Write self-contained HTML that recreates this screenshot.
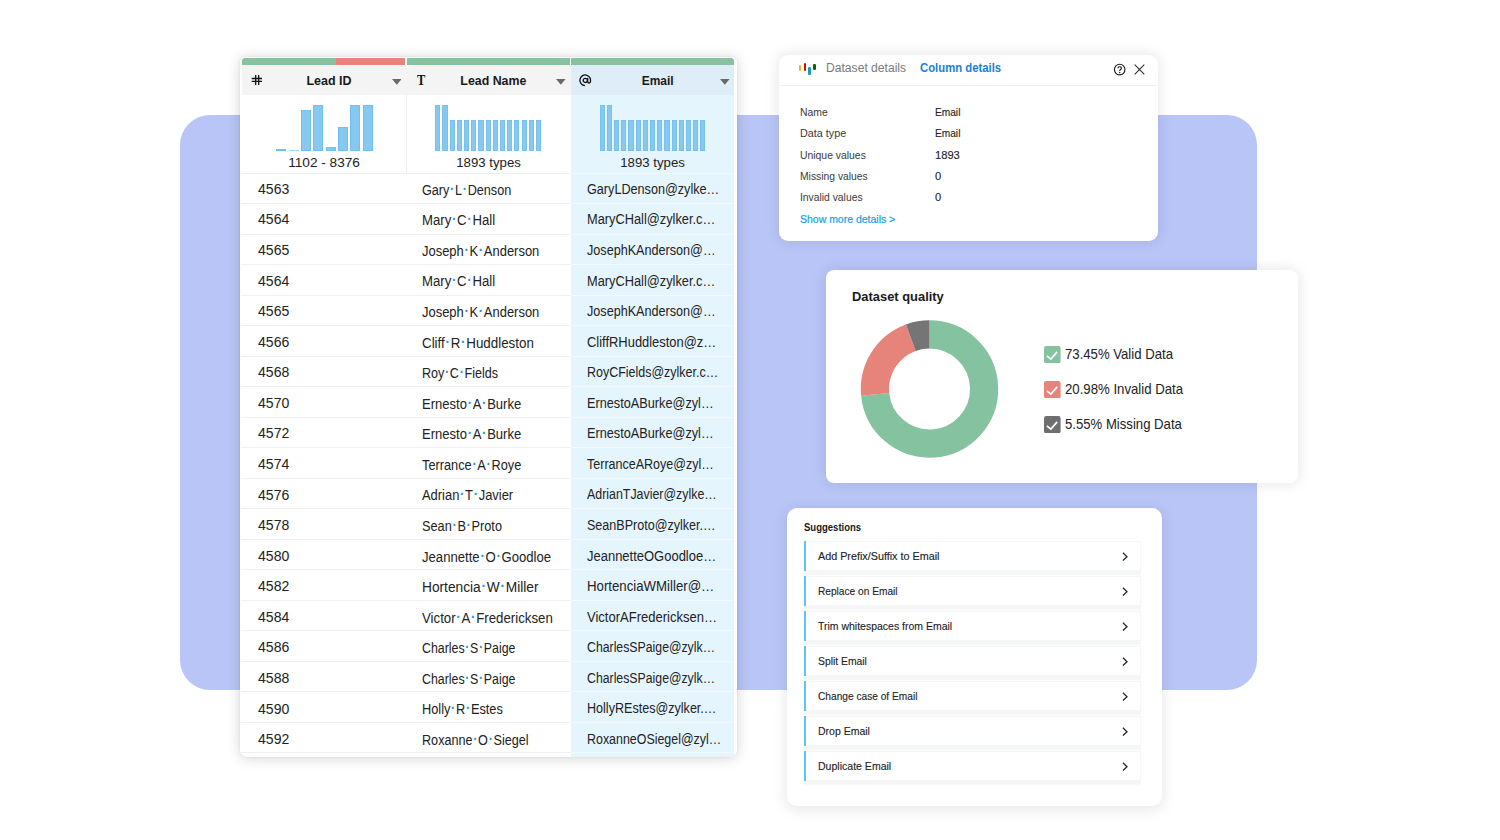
<!DOCTYPE html>
<html lang="en"><head><meta charset="utf-8"><title>Dataset details</title><style>
html,body{margin:0;padding:0;background:#fff;}
body{width:1500px;height:840px;position:relative;overflow:hidden;font-family:"Liberation Sans", sans-serif;}
body div,body svg,.t{position:absolute;}
.tbl{overflow:hidden;border-radius:5px 5px 7px 7px;}
.t{white-space:pre;line-height:20px;display:inline-block;}
.t i{font-style:normal;color:#1a98ea;font-weight:700;padding:0 .75px;position:relative;top:-1px;}
</style></head><body>
<div style="left:180.00px;top:115.00px;width:1077.00px;height:575.00px;background:#b9c5f6;border-radius:30px;"></div>
<section aria-label="Leads data table">
<div style="left:240.30px;top:57.00px;width:496.50px;height:699.60px;background:#fff;border-radius:5px 5px 7px 7px;box-shadow:0 1px 14px rgba(0,0,0,.17),0 0 3px rgba(0,0,0,.07);"></div>
<div class="tbl" style="left:240.3px;top:57.0px;width:496.50px;height:699.60px;"><div style="left:1.70px;top:7.60px;width:328.80px;height:30.00px;background:#f4f4f4;"></div>
<div style="left:330.50px;top:7.60px;width:163.70px;height:30.00px;background:#deedf7;"></div>
<div style="left:330.50px;top:37.60px;width:163.70px;height:662.00px;background:#e5f5fe;"></div>
<div style="left:1.70px;top:1.00px;width:94.00px;height:6.60px;background:#85c2a0;border-radius:3px 0 0 0;"></div>
<div style="left:95.70px;top:1.00px;width:69.30px;height:6.60px;background:#e6837b;"></div>
<div style="left:166.70px;top:1.00px;width:162.80px;height:6.60px;background:#85c2a0;"></div>
<div style="left:331.00px;top:1.00px;width:163.20px;height:6.60px;background:#85c2a0;border-radius:0 3px 0 0;"></div>
<div style="left:165.30px;top:37.60px;width:1.00px;height:78.50px;background:#efefef;"></div>
<div style="left:0.50px;top:115.50px;width:330.00px;height:1.20px;background:#f0f0f0;"></div>
<div style="left:330.50px;top:115.50px;width:163.70px;height:1.20px;background:#f3f9fd;"></div>
<div style="left:0.50px;top:146.02px;width:330.00px;height:1.20px;background:#f0f0f0;"></div>
<div style="left:330.50px;top:146.02px;width:163.70px;height:1.20px;background:#f3f9fd;"></div>
<div style="left:0.50px;top:176.53px;width:330.00px;height:1.20px;background:#f0f0f0;"></div>
<div style="left:330.50px;top:176.53px;width:163.70px;height:1.20px;background:#f3f9fd;"></div>
<div style="left:0.50px;top:207.05px;width:330.00px;height:1.20px;background:#f0f0f0;"></div>
<div style="left:330.50px;top:207.05px;width:163.70px;height:1.20px;background:#f3f9fd;"></div>
<div style="left:0.50px;top:237.56px;width:330.00px;height:1.20px;background:#f0f0f0;"></div>
<div style="left:330.50px;top:237.56px;width:163.70px;height:1.20px;background:#f3f9fd;"></div>
<div style="left:0.50px;top:268.08px;width:330.00px;height:1.20px;background:#f0f0f0;"></div>
<div style="left:330.50px;top:268.08px;width:163.70px;height:1.20px;background:#f3f9fd;"></div>
<div style="left:0.50px;top:298.60px;width:330.00px;height:1.20px;background:#f0f0f0;"></div>
<div style="left:330.50px;top:298.60px;width:163.70px;height:1.20px;background:#f3f9fd;"></div>
<div style="left:0.50px;top:329.11px;width:330.00px;height:1.20px;background:#f0f0f0;"></div>
<div style="left:330.50px;top:329.11px;width:163.70px;height:1.20px;background:#f3f9fd;"></div>
<div style="left:0.50px;top:359.63px;width:330.00px;height:1.20px;background:#f0f0f0;"></div>
<div style="left:330.50px;top:359.63px;width:163.70px;height:1.20px;background:#f3f9fd;"></div>
<div style="left:0.50px;top:390.14px;width:330.00px;height:1.20px;background:#f0f0f0;"></div>
<div style="left:330.50px;top:390.14px;width:163.70px;height:1.20px;background:#f3f9fd;"></div>
<div style="left:0.50px;top:420.66px;width:330.00px;height:1.20px;background:#f0f0f0;"></div>
<div style="left:330.50px;top:420.66px;width:163.70px;height:1.20px;background:#f3f9fd;"></div>
<div style="left:0.50px;top:451.18px;width:330.00px;height:1.20px;background:#f0f0f0;"></div>
<div style="left:330.50px;top:451.18px;width:163.70px;height:1.20px;background:#f3f9fd;"></div>
<div style="left:0.50px;top:481.69px;width:330.00px;height:1.20px;background:#f0f0f0;"></div>
<div style="left:330.50px;top:481.69px;width:163.70px;height:1.20px;background:#f3f9fd;"></div>
<div style="left:0.50px;top:512.21px;width:330.00px;height:1.20px;background:#f0f0f0;"></div>
<div style="left:330.50px;top:512.21px;width:163.70px;height:1.20px;background:#f3f9fd;"></div>
<div style="left:0.50px;top:542.72px;width:330.00px;height:1.20px;background:#f0f0f0;"></div>
<div style="left:330.50px;top:542.72px;width:163.70px;height:1.20px;background:#f3f9fd;"></div>
<div style="left:0.50px;top:573.24px;width:330.00px;height:1.20px;background:#f0f0f0;"></div>
<div style="left:330.50px;top:573.24px;width:163.70px;height:1.20px;background:#f3f9fd;"></div>
<div style="left:0.50px;top:603.76px;width:330.00px;height:1.20px;background:#f0f0f0;"></div>
<div style="left:330.50px;top:603.76px;width:163.70px;height:1.20px;background:#f3f9fd;"></div>
<div style="left:0.50px;top:634.27px;width:330.00px;height:1.20px;background:#f0f0f0;"></div>
<div style="left:330.50px;top:634.27px;width:163.70px;height:1.20px;background:#f3f9fd;"></div>
<div style="left:0.50px;top:664.79px;width:330.00px;height:1.20px;background:#f0f0f0;"></div>
<div style="left:330.50px;top:664.79px;width:163.70px;height:1.20px;background:#f3f9fd;"></div>
<div style="left:0.50px;top:695.30px;width:330.00px;height:1.20px;background:#f0f0f0;"></div>
<div style="left:330.50px;top:695.30px;width:163.70px;height:1.20px;background:#f3f9fd;"></div>
<div style="left:35.90px;top:91.50px;width:10.20px;height:2.80px;background:#87c8f0;box-shadow:inset 0 0 0 .8px #6dbcee;"></div>
<div style="left:48.25px;top:93.00px;width:10.20px;height:1.30px;background:#a9d8f5;"></div>
<div style="left:60.60px;top:52.80px;width:10.20px;height:41.50px;background:#87c8f0;box-shadow:inset 0 0 0 .8px #6dbcee;"></div>
<div style="left:72.95px;top:47.70px;width:10.20px;height:46.60px;background:#87c8f0;box-shadow:inset 0 0 0 .8px #6dbcee;"></div>
<div style="left:85.30px;top:90.30px;width:10.20px;height:4.00px;background:#87c8f0;box-shadow:inset 0 0 0 .8px #6dbcee;"></div>
<div style="left:97.65px;top:70.00px;width:10.20px;height:24.30px;background:#87c8f0;box-shadow:inset 0 0 0 .8px #6dbcee;"></div>
<div style="left:110.00px;top:47.70px;width:10.20px;height:46.60px;background:#87c8f0;box-shadow:inset 0 0 0 .8px #6dbcee;"></div>
<div style="left:122.35px;top:47.70px;width:10.20px;height:46.60px;background:#87c8f0;box-shadow:inset 0 0 0 .8px #6dbcee;"></div>
<div style="left:195.00px;top:47.70px;width:5.10px;height:46.60px;background:#87c8f0;box-shadow:inset 0 0 0 .6px #6dbcee;"></div>
<div style="left:202.19px;top:47.70px;width:5.10px;height:46.60px;background:#87c8f0;box-shadow:inset 0 0 0 .6px #6dbcee;"></div>
<div style="left:209.38px;top:62.80px;width:5.10px;height:31.50px;background:#87c8f0;box-shadow:inset 0 0 0 .6px #6dbcee;"></div>
<div style="left:216.57px;top:62.80px;width:5.10px;height:31.50px;background:#87c8f0;box-shadow:inset 0 0 0 .6px #6dbcee;"></div>
<div style="left:223.76px;top:62.80px;width:5.10px;height:31.50px;background:#87c8f0;box-shadow:inset 0 0 0 .6px #6dbcee;"></div>
<div style="left:230.95px;top:62.80px;width:5.10px;height:31.50px;background:#87c8f0;box-shadow:inset 0 0 0 .6px #6dbcee;"></div>
<div style="left:238.14px;top:62.80px;width:5.10px;height:31.50px;background:#87c8f0;box-shadow:inset 0 0 0 .6px #6dbcee;"></div>
<div style="left:245.33px;top:62.80px;width:5.10px;height:31.50px;background:#87c8f0;box-shadow:inset 0 0 0 .6px #6dbcee;"></div>
<div style="left:252.52px;top:62.80px;width:5.10px;height:31.50px;background:#87c8f0;box-shadow:inset 0 0 0 .6px #6dbcee;"></div>
<div style="left:259.71px;top:62.80px;width:5.10px;height:31.50px;background:#87c8f0;box-shadow:inset 0 0 0 .6px #6dbcee;"></div>
<div style="left:266.90px;top:62.80px;width:5.10px;height:31.50px;background:#87c8f0;box-shadow:inset 0 0 0 .6px #6dbcee;"></div>
<div style="left:274.09px;top:62.80px;width:5.10px;height:31.50px;background:#87c8f0;box-shadow:inset 0 0 0 .6px #6dbcee;"></div>
<div style="left:281.28px;top:62.80px;width:5.10px;height:31.50px;background:#87c8f0;box-shadow:inset 0 0 0 .6px #6dbcee;"></div>
<div style="left:288.47px;top:62.80px;width:5.10px;height:31.50px;background:#87c8f0;box-shadow:inset 0 0 0 .6px #6dbcee;"></div>
<div style="left:295.66px;top:62.80px;width:5.10px;height:31.50px;background:#87c8f0;box-shadow:inset 0 0 0 .6px #6dbcee;"></div>
<div style="left:359.40px;top:47.70px;width:5.10px;height:46.60px;background:#87c8f0;box-shadow:inset 0 0 0 .6px #6dbcee;"></div>
<div style="left:366.59px;top:47.70px;width:5.10px;height:46.60px;background:#87c8f0;box-shadow:inset 0 0 0 .6px #6dbcee;"></div>
<div style="left:373.78px;top:62.80px;width:5.10px;height:31.50px;background:#87c8f0;box-shadow:inset 0 0 0 .6px #6dbcee;"></div>
<div style="left:380.97px;top:62.80px;width:5.10px;height:31.50px;background:#87c8f0;box-shadow:inset 0 0 0 .6px #6dbcee;"></div>
<div style="left:388.16px;top:62.80px;width:5.10px;height:31.50px;background:#87c8f0;box-shadow:inset 0 0 0 .6px #6dbcee;"></div>
<div style="left:395.35px;top:62.80px;width:5.10px;height:31.50px;background:#87c8f0;box-shadow:inset 0 0 0 .6px #6dbcee;"></div>
<div style="left:402.54px;top:62.80px;width:5.10px;height:31.50px;background:#87c8f0;box-shadow:inset 0 0 0 .6px #6dbcee;"></div>
<div style="left:409.73px;top:62.80px;width:5.10px;height:31.50px;background:#87c8f0;box-shadow:inset 0 0 0 .6px #6dbcee;"></div>
<div style="left:416.92px;top:62.80px;width:5.10px;height:31.50px;background:#87c8f0;box-shadow:inset 0 0 0 .6px #6dbcee;"></div>
<div style="left:424.11px;top:62.80px;width:5.10px;height:31.50px;background:#87c8f0;box-shadow:inset 0 0 0 .6px #6dbcee;"></div>
<div style="left:431.30px;top:62.80px;width:5.10px;height:31.50px;background:#87c8f0;box-shadow:inset 0 0 0 .6px #6dbcee;"></div>
<div style="left:438.49px;top:62.80px;width:5.10px;height:31.50px;background:#87c8f0;box-shadow:inset 0 0 0 .6px #6dbcee;"></div>
<div style="left:445.68px;top:62.80px;width:5.10px;height:31.50px;background:#87c8f0;box-shadow:inset 0 0 0 .6px #6dbcee;"></div>
<div style="left:452.87px;top:62.80px;width:5.10px;height:31.50px;background:#87c8f0;box-shadow:inset 0 0 0 .6px #6dbcee;"></div>
<div style="left:460.06px;top:62.80px;width:5.10px;height:31.50px;background:#87c8f0;box-shadow:inset 0 0 0 .6px #6dbcee;"></div>
<svg style="left:151.50px;top:22.00px" width="9.6" height="5.8" viewBox="0 0 9.6 5.8"><path d="M0 0H9.6L4.8 5.8Z" fill="#6a6a6a"/></svg>
<svg style="left:315.70px;top:22.00px" width="9.6" height="5.8" viewBox="0 0 9.6 5.8"><path d="M0 0H9.6L4.8 5.8Z" fill="#6a6a6a"/></svg>
<svg style="left:480.10px;top:22.00px" width="9.6" height="5.8" viewBox="0 0 9.6 5.8"><path d="M0 0H9.6L4.8 5.8Z" fill="#6a6a6a"/></svg>
<svg style="left:10.30px;top:18.00px" width="11.6" height="10.6" viewBox="0 0 11.6 10.6"><path d="M4.7 0.1V10.1M7.7 0.1V10.1M0.7 3.5H11.3M0.7 6.45H11.3" stroke="#111" stroke-width="1.3" fill="none"/></svg>
<svg style="left:338.70px;top:16.60px" width="13.4" height="13" viewBox="0 0 13.4 13"><circle cx="6.3" cy="6.4" r="2.1" fill="none" stroke="#111" stroke-width="1.3"/><path d="M8.7 4.5V7.4C8.7 9.5 11.4 9.6 11.42 7.4A5.3 5.3 0 1 0 5.4 11.5" fill="none" stroke="#111" stroke-width="1.3" stroke-linecap="round"/></svg></div>
<span class="t" style="left:416.9px;top:71px;font-family:'Liberation Serif',serif;font-weight:700;font-size:14px;color:#111;transform:scaleX(.88);transform-origin:0 50%;">T</span>
<span class="t" style="left:257.70px;top:179.00px;font-size:13.84px;color:#222;transform:scaleX(1.0172);transform-origin:0 50%;">4563</span>
<span class="t" style="left:421.80px;top:180.00px;font-size:13.84px;color:#222;transform:scaleX(0.9147);transform-origin:0 50%;">Gary<i>·</i>L<i>·</i>Denson</span>
<span class="t" style="left:586.70px;top:179.00px;font-size:13.84px;color:#222;transform:scaleX(0.9137);transform-origin:0 50%;">GaryLDenson@zylke…</span>
<span class="t" style="left:257.70px;top:209.00px;font-size:13.84px;color:#222;transform:scaleX(1.0172);transform-origin:0 50%;">4564</span>
<span class="t" style="left:421.80px;top:210.00px;font-size:13.84px;color:#222;transform:scaleX(0.9522);transform-origin:0 50%;">Mary<i>·</i>C<i>·</i>Hall</span>
<span class="t" style="left:586.70px;top:209.00px;font-size:13.84px;color:#222;transform:scaleX(0.9260);transform-origin:0 50%;">MaryCHall@zylker.c…</span>
<span class="t" style="left:257.70px;top:240.00px;font-size:13.84px;color:#222;transform:scaleX(1.0172);transform-origin:0 50%;">4565</span>
<span class="t" style="left:421.80px;top:241.00px;font-size:13.84px;color:#222;transform:scaleX(0.9367);transform-origin:0 50%;">Joseph<i>·</i>K<i>·</i>Anderson</span>
<span class="t" style="left:586.70px;top:240.00px;font-size:13.84px;color:#222;transform:scaleX(0.9125);transform-origin:0 50%;">JosephKAnderson@…</span>
<span class="t" style="left:257.70px;top:271.00px;font-size:13.84px;color:#222;transform:scaleX(1.0172);transform-origin:0 50%;">4564</span>
<span class="t" style="left:421.80px;top:271.00px;font-size:13.84px;color:#222;transform:scaleX(0.9522);transform-origin:0 50%;">Mary<i>·</i>C<i>·</i>Hall</span>
<span class="t" style="left:586.70px;top:271.00px;font-size:13.84px;color:#222;transform:scaleX(0.9260);transform-origin:0 50%;">MaryCHall@zylker.c…</span>
<span class="t" style="left:257.70px;top:301.00px;font-size:13.84px;color:#222;transform:scaleX(1.0172);transform-origin:0 50%;">4565</span>
<span class="t" style="left:421.80px;top:302.00px;font-size:13.84px;color:#222;transform:scaleX(0.9367);transform-origin:0 50%;">Joseph<i>·</i>K<i>·</i>Anderson</span>
<span class="t" style="left:586.70px;top:301.00px;font-size:13.84px;color:#222;transform:scaleX(0.9125);transform-origin:0 50%;">JosephKAnderson@…</span>
<span class="t" style="left:257.70px;top:332.00px;font-size:13.84px;color:#222;transform:scaleX(1.0172);transform-origin:0 50%;">4566</span>
<span class="t" style="left:421.80px;top:333.00px;font-size:13.84px;color:#222;transform:scaleX(0.9661);transform-origin:0 50%;">Cliff<i>·</i>R<i>·</i>Huddleston</span>
<span class="t" style="left:586.70px;top:332.00px;font-size:13.84px;color:#222;transform:scaleX(0.9346);transform-origin:0 50%;">CliffRHuddleston@z…</span>
<span class="t" style="left:257.70px;top:362.00px;font-size:13.84px;color:#222;transform:scaleX(1.0172);transform-origin:0 50%;">4568</span>
<span class="t" style="left:421.80px;top:363.00px;font-size:13.84px;color:#222;transform:scaleX(0.9078);transform-origin:0 50%;">Roy<i>·</i>C<i>·</i>Fields</span>
<span class="t" style="left:586.70px;top:362.00px;font-size:13.84px;color:#222;transform:scaleX(0.9017);transform-origin:0 50%;">RoyCFields@zylker.c…</span>
<span class="t" style="left:257.70px;top:393.00px;font-size:13.84px;color:#222;transform:scaleX(1.0172);transform-origin:0 50%;">4570</span>
<span class="t" style="left:421.80px;top:394.00px;font-size:13.84px;color:#222;transform:scaleX(0.9428);transform-origin:0 50%;">Ernesto<i>·</i>A<i>·</i>Burke</span>
<span class="t" style="left:586.70px;top:393.00px;font-size:13.84px;color:#222;transform:scaleX(0.9191);transform-origin:0 50%;">ErnestoABurke@zyl…</span>
<span class="t" style="left:257.70px;top:423.00px;font-size:13.84px;color:#222;transform:scaleX(1.0172);transform-origin:0 50%;">4572</span>
<span class="t" style="left:421.80px;top:424.00px;font-size:13.84px;color:#222;transform:scaleX(0.9428);transform-origin:0 50%;">Ernesto<i>·</i>A<i>·</i>Burke</span>
<span class="t" style="left:586.70px;top:423.00px;font-size:13.84px;color:#222;transform:scaleX(0.9191);transform-origin:0 50%;">ErnestoABurke@zyl…</span>
<span class="t" style="left:257.70px;top:454.00px;font-size:13.84px;color:#222;transform:scaleX(1.0172);transform-origin:0 50%;">4574</span>
<span class="t" style="left:421.80px;top:455.00px;font-size:13.84px;color:#222;transform:scaleX(0.9236);transform-origin:0 50%;">Terrance<i>·</i>A<i>·</i>Roye</span>
<span class="t" style="left:586.70px;top:454.00px;font-size:13.84px;color:#222;transform:scaleX(0.9054);transform-origin:0 50%;">TerranceARoye@zyl…</span>
<span class="t" style="left:257.70px;top:485.00px;font-size:13.84px;color:#222;transform:scaleX(1.0172);transform-origin:0 50%;">4576</span>
<span class="t" style="left:421.80px;top:485.00px;font-size:13.84px;color:#222;transform:scaleX(0.9343);transform-origin:0 50%;">Adrian<i>·</i>T<i>·</i>Javier</span>
<span class="t" style="left:586.70px;top:484.00px;font-size:13.84px;color:#222;transform:scaleX(0.8966);transform-origin:0 50%;">AdrianTJavier@zylke…</span>
<span class="t" style="left:257.70px;top:515.00px;font-size:13.84px;color:#222;transform:scaleX(1.0172);transform-origin:0 50%;">4578</span>
<span class="t" style="left:421.80px;top:516.00px;font-size:13.84px;color:#222;transform:scaleX(0.9212);transform-origin:0 50%;">Sean<i>·</i>B<i>·</i>Proto</span>
<span class="t" style="left:586.70px;top:515.00px;font-size:13.84px;color:#222;transform:scaleX(0.9079);transform-origin:0 50%;">SeanBProto@zylker.…</span>
<span class="t" style="left:257.70px;top:546.00px;font-size:13.84px;color:#222;transform:scaleX(1.0172);transform-origin:0 50%;">4580</span>
<span class="t" style="left:421.80px;top:547.00px;font-size:13.84px;color:#222;transform:scaleX(0.9493);transform-origin:0 50%;">Jeannette<i>·</i>O<i>·</i>Goodloe</span>
<span class="t" style="left:586.70px;top:546.00px;font-size:13.84px;color:#222;transform:scaleX(0.9386);transform-origin:0 50%;">JeannetteOGoodloe…</span>
<span class="t" style="left:257.70px;top:576.00px;font-size:13.84px;color:#222;transform:scaleX(1.0172);transform-origin:0 50%;">4582</span>
<span class="t" style="left:421.80px;top:577.00px;font-size:13.84px;color:#222;transform:scaleX(0.9919);transform-origin:0 50%;">Hortencia<i>·</i>W<i>·</i>Miller</span>
<span class="t" style="left:586.70px;top:576.00px;font-size:13.84px;color:#222;transform:scaleX(0.9561);transform-origin:0 50%;">HortenciaWMiller@…</span>
<span class="t" style="left:257.70px;top:607.00px;font-size:13.84px;color:#222;transform:scaleX(1.0172);transform-origin:0 50%;">4584</span>
<span class="t" style="left:421.80px;top:608.00px;font-size:13.84px;color:#222;transform:scaleX(0.9580);transform-origin:0 50%;">Victor<i>·</i>A<i>·</i>Fredericksen</span>
<span class="t" style="left:586.70px;top:607.00px;font-size:13.84px;color:#222;transform:scaleX(0.9421);transform-origin:0 50%;">VictorAFredericksen…</span>
<span class="t" style="left:257.70px;top:637.00px;font-size:13.84px;color:#222;transform:scaleX(1.0172);transform-origin:0 50%;">4586</span>
<span class="t" style="left:421.80px;top:638.00px;font-size:13.84px;color:#222;transform:scaleX(0.8950);transform-origin:0 50%;">Charles<i>·</i>S<i>·</i>Paige</span>
<span class="t" style="left:586.70px;top:637.00px;font-size:13.84px;color:#222;transform:scaleX(0.8888);transform-origin:0 50%;">CharlesSPaige@zylk…</span>
<span class="t" style="left:257.70px;top:668.00px;font-size:13.84px;color:#222;transform:scaleX(1.0172);transform-origin:0 50%;">4588</span>
<span class="t" style="left:421.80px;top:669.00px;font-size:13.84px;color:#222;transform:scaleX(0.8950);transform-origin:0 50%;">Charles<i>·</i>S<i>·</i>Paige</span>
<span class="t" style="left:586.70px;top:668.00px;font-size:13.84px;color:#222;transform:scaleX(0.8888);transform-origin:0 50%;">CharlesSPaige@zylk…</span>
<span class="t" style="left:257.70px;top:699.00px;font-size:13.84px;color:#222;transform:scaleX(1.0172);transform-origin:0 50%;">4590</span>
<span class="t" style="left:421.80px;top:699.00px;font-size:13.84px;color:#222;transform:scaleX(0.9234);transform-origin:0 50%;">Holly<i>·</i>R<i>·</i>Estes</span>
<span class="t" style="left:586.70px;top:698.00px;font-size:13.84px;color:#222;transform:scaleX(0.9092);transform-origin:0 50%;">HollyREstes@zylker.…</span>
<span class="t" style="left:257.70px;top:729.00px;font-size:13.84px;color:#222;transform:scaleX(1.0172);transform-origin:0 50%;">4592</span>
<span class="t" style="left:421.80px;top:730.00px;font-size:13.84px;color:#222;transform:scaleX(0.9129);transform-origin:0 50%;">Roxanne<i>·</i>O<i>·</i>Siegel</span>
<span class="t" style="left:586.70px;top:729.00px;font-size:13.84px;color:#222;transform:scaleX(0.8985);transform-origin:0 50%;">RoxanneOSiegel@zyl…</span>
<span class="t" style="left:305.17px;top:71.00px;font-size:13.25px;color:#1a1a1a;transform:scaleX(0.9420);transform-origin:50% 50%;font-weight:700;">Lead ID</span>
<span class="t" style="left:458.05px;top:71.00px;font-size:13.25px;color:#1a1a1a;transform:scaleX(0.9338);transform-origin:50% 50%;font-weight:700;">Lead Name</span>
<span class="t" style="left:640.22px;top:71.00px;font-size:13.25px;color:#1a1a1a;transform:scaleX(0.9039);transform-origin:50% 50%;font-weight:700;">Email</span>
<span class="t" style="left:289.14px;top:153.00px;font-size:13.32px;color:#222;transform:scaleX(1.0242);transform-origin:50% 50%;">1102 - 8376</span>
<span class="t" style="left:456.11px;top:153.00px;font-size:13.32px;color:#222;transform:scaleX(0.9917);transform-origin:50% 50%;">1893 types</span>
<span class="t" style="left:620.41px;top:153.00px;font-size:13.32px;color:#222;transform:scaleX(0.9917);transform-origin:50% 50%;">1893 types</span>
</section>
<section aria-label="Column details">
<div style="left:779.3px;top:54.6px;width:378.6px;height:186px;background:#fff;border-radius:9px;box-shadow:0 0 13px 2px rgba(0,0,0,.085);"></div>
<div style="left:779.3px;top:85.3px;width:378.6px;height:1px;background:#f0f0f0;"></div>
<div style="left:798.8px;top:64.8px;width:2.4px;height:6.2px;background:#f0b323;border-radius:1.2px;"></div>
<div style="left:803.8px;top:63.2px;width:2.4px;height:7.8px;background:#cc1100;border-radius:1.2px;"></div>
<div style="left:808.3px;top:67.0px;width:2.4px;height:7.9px;background:#1a98b4;border-radius:1.2px;"></div>
<div style="left:813.3px;top:64.0px;width:2.4px;height:6.1px;background:#0b5e0b;border-radius:1.2px;"></div>
<svg style="left:1113px;top:63px" width="13.4" height="13.4" viewBox="0 0 13.4 13.4"><circle cx="6.7" cy="6.6" r="5.3" fill="none" stroke="#1a1a1a" stroke-width="1.15"/><path d="M4.9 5.3C4.9 3.2 8.4 3.2 8.4 5.2C8.4 6.5 6.7 6.5 6.7 7.9" fill="none" stroke="#1a1a1a" stroke-width="1.15"/><circle cx="6.7" cy="9.5" r=".75" fill="#1a1a1a"/></svg>
<svg style="left:1134px;top:64px" width="11" height="11" viewBox="0 0 11 11"><path d="M0.7 0.7L10.3 10.3M10.3 0.7L0.7 10.3" stroke="#2a2a2a" stroke-width="1.05" fill="none"/></svg>
<span class="t" style="left:826.00px;top:58.00px;font-size:12.61px;color:#7a7a7a;transform:scaleX(0.9606);transform-origin:0 50%;">Dataset details</span>
<span class="t" style="left:920.00px;top:58.00px;font-size:12.3px;color:#1b7fd6;transform:scaleX(0.9209);transform-origin:0 50%;font-weight:700;">Column details</span>
<span class="t" style="left:800.30px;top:102.00px;font-size:10.97px;color:#3a3a3a;transform:scaleX(0.9493);transform-origin:0 50%;">Name</span>
<span class="t" style="left:935.30px;top:102.00px;font-size:10.97px;color:#222;transform:scaleX(0.9254);transform-origin:0 50%;-webkit-text-stroke:0.12px #222;">Email</span>
<span class="t" style="left:800.30px;top:123.00px;font-size:10.97px;color:#3a3a3a;transform:scaleX(0.9826);transform-origin:0 50%;">Data type</span>
<span class="t" style="left:935.30px;top:123.00px;font-size:10.97px;color:#222;transform:scaleX(0.9254);transform-origin:0 50%;-webkit-text-stroke:0.12px #222;">Email</span>
<span class="t" style="left:800.30px;top:145.00px;font-size:10.97px;color:#3a3a3a;transform:scaleX(0.9469);transform-origin:0 50%;">Unique values</span>
<span class="t" style="left:935.30px;top:145.00px;font-size:10.97px;color:#222;transform:scaleX(1.0172);transform-origin:0 50%;-webkit-text-stroke:0.12px #222;">1893</span>
<span class="t" style="left:800.30px;top:166.00px;font-size:10.97px;color:#3a3a3a;transform:scaleX(0.9420);transform-origin:0 50%;">Missing values</span>
<span class="t" style="left:935.30px;top:166.00px;font-size:10.97px;color:#222;transform:scaleX(1.0170);transform-origin:0 50%;-webkit-text-stroke:0.12px #222;">0</span>
<span class="t" style="left:800.30px;top:187.00px;font-size:10.97px;color:#3a3a3a;transform:scaleX(0.9412);transform-origin:0 50%;">Invalid values</span>
<span class="t" style="left:935.30px;top:187.00px;font-size:10.97px;color:#222;transform:scaleX(1.0170);transform-origin:0 50%;-webkit-text-stroke:0.12px #222;">0</span>
<span class="t" style="left:800.30px;top:209.00px;font-size:10.97px;color:#12a0ee;transform:scaleX(0.9554);transform-origin:0 50%;-webkit-text-stroke:0.2px #12a0ee;">Show more details &gt;</span>
</section>
<section aria-label="Dataset quality">
<div style="left:826.2px;top:269.8px;width:471.6px;height:213.4px;background:#fff;border-radius:8px;box-shadow:0 0 13px 2px rgba(0,0,0,.085);"></div>
<svg style="left:1044.4px;top:345.6px" width="16.6" height="17.4" viewBox="0 0 16.6 17.4"><rect x="0" y="0" width="16.6" height="17.4" rx="2.2" fill="#84c2a0"/><path d="M2.9 9.9L6.9 13.1L13.2 5.9" fill="none" stroke="#fff" stroke-width="1.8"/></svg>
<svg style="left:1044.4px;top:380.6px" width="16.6" height="17.4" viewBox="0 0 16.6 17.4"><rect x="0" y="0" width="16.6" height="17.4" rx="2.2" fill="#e6837b"/><path d="M2.9 9.9L6.9 13.1L13.2 5.9" fill="none" stroke="#fff" stroke-width="1.8"/></svg>
<svg style="left:1044.4px;top:415.6px" width="16.6" height="17.4" viewBox="0 0 16.6 17.4"><rect x="0" y="0" width="16.6" height="17.4" rx="2.2" fill="#6f6f6f"/><path d="M2.9 9.9L6.9 13.1L13.2 5.9" fill="none" stroke="#fff" stroke-width="1.8"/></svg>
<svg style="left:855px;top:314px" width="150" height="150" viewBox="855 314 150 150"><path d="M929.50 334.40A54.60 54.60 0 1 1 875.16 394.31" fill="none" stroke="#84c2a0" stroke-width="28.20"/><path d="M875.16 394.31A54.60 54.60 0 0 1 910.78 337.71" fill="none" stroke="#e6837b" stroke-width="28.20"/><path d="M910.78 337.71A54.60 54.60 0 0 1 929.50 334.40" fill="none" stroke="#757575" stroke-width="28.20"/></svg>
<span class="t" style="left:852.30px;top:287.00px;font-size:13.6px;color:#1a1a1a;transform:scaleX(0.9493);transform-origin:0 50%;font-weight:700;">Dataset quality</span>
<span class="t" style="left:1065.40px;top:345.00px;font-size:13.73px;color:#222;transform:scaleX(0.9587);transform-origin:0 50%;">73.45% Valid Data</span>
<span class="t" style="left:1065.40px;top:380.00px;font-size:13.73px;color:#222;transform:scaleX(0.9619);transform-origin:0 50%;">20.98% Invalid Data</span>
<span class="t" style="left:1065.40px;top:415.00px;font-size:13.73px;color:#222;transform:scaleX(0.9579);transform-origin:0 50%;">5.55% Missing Data</span>
</section>
<section aria-label="Suggestions">
<div style="left:786.8px;top:507.7px;width:374.8px;height:298.7px;background:#fff;border-radius:10px;box-shadow:0 3px 14px 2px rgba(0,0,0,.085);"></div>
<div style="left:804.2px;top:541.30px;width:337.2px;height:29.7px;background:#fff;box-shadow:inset 0 0 0 1px #f6f6f6,0 4px 1.5px 0 #f5f6f6;"></div>
<div style="left:804.2px;top:541.30px;width:2px;height:29.7px;background:#5ac5f7;"></div>
<svg style="left:1122.4px;top:552.00px" width="6" height="9.4" viewBox="0 0 6 9.4"><path d="M0.9 0.8L5 4.7L0.9 8.6" fill="none" stroke="#2a2a2a" stroke-width="1.3"/></svg>
<div style="left:804.2px;top:576.27px;width:337.2px;height:29.7px;background:#fff;box-shadow:inset 0 0 0 1px #f6f6f6,0 4px 1.5px 0 #f5f6f6;"></div>
<div style="left:804.2px;top:576.27px;width:2px;height:29.7px;background:#5ac5f7;"></div>
<svg style="left:1122.4px;top:586.97px" width="6" height="9.4" viewBox="0 0 6 9.4"><path d="M0.9 0.8L5 4.7L0.9 8.6" fill="none" stroke="#2a2a2a" stroke-width="1.3"/></svg>
<div style="left:804.2px;top:611.24px;width:337.2px;height:29.7px;background:#fff;box-shadow:inset 0 0 0 1px #f6f6f6,0 4px 1.5px 0 #f5f6f6;"></div>
<div style="left:804.2px;top:611.24px;width:2px;height:29.7px;background:#5ac5f7;"></div>
<svg style="left:1122.4px;top:621.94px" width="6" height="9.4" viewBox="0 0 6 9.4"><path d="M0.9 0.8L5 4.7L0.9 8.6" fill="none" stroke="#2a2a2a" stroke-width="1.3"/></svg>
<div style="left:804.2px;top:646.21px;width:337.2px;height:29.7px;background:#fff;box-shadow:inset 0 0 0 1px #f6f6f6,0 4px 1.5px 0 #f5f6f6;"></div>
<div style="left:804.2px;top:646.21px;width:2px;height:29.7px;background:#5ac5f7;"></div>
<svg style="left:1122.4px;top:656.91px" width="6" height="9.4" viewBox="0 0 6 9.4"><path d="M0.9 0.8L5 4.7L0.9 8.6" fill="none" stroke="#2a2a2a" stroke-width="1.3"/></svg>
<div style="left:804.2px;top:681.18px;width:337.2px;height:29.7px;background:#fff;box-shadow:inset 0 0 0 1px #f6f6f6,0 4px 1.5px 0 #f5f6f6;"></div>
<div style="left:804.2px;top:681.18px;width:2px;height:29.7px;background:#5ac5f7;"></div>
<svg style="left:1122.4px;top:691.88px" width="6" height="9.4" viewBox="0 0 6 9.4"><path d="M0.9 0.8L5 4.7L0.9 8.6" fill="none" stroke="#2a2a2a" stroke-width="1.3"/></svg>
<div style="left:804.2px;top:716.15px;width:337.2px;height:29.7px;background:#fff;box-shadow:inset 0 0 0 1px #f6f6f6,0 4px 1.5px 0 #f5f6f6;"></div>
<div style="left:804.2px;top:716.15px;width:2px;height:29.7px;background:#5ac5f7;"></div>
<svg style="left:1122.4px;top:726.85px" width="6" height="9.4" viewBox="0 0 6 9.4"><path d="M0.9 0.8L5 4.7L0.9 8.6" fill="none" stroke="#2a2a2a" stroke-width="1.3"/></svg>
<div style="left:804.2px;top:751.12px;width:337.2px;height:29.7px;background:#fff;box-shadow:inset 0 0 0 1px #f6f6f6,0 4px 1.5px 0 #f5f6f6;"></div>
<div style="left:804.2px;top:751.12px;width:2px;height:29.7px;background:#5ac5f7;"></div>
<svg style="left:1122.4px;top:761.82px" width="6" height="9.4" viewBox="0 0 6 9.4"><path d="M0.9 0.8L5 4.7L0.9 8.6" fill="none" stroke="#2a2a2a" stroke-width="1.3"/></svg>
<span class="t" style="left:804.00px;top:517.00px;font-size:10.7px;color:#1a1a1a;transform:scaleX(0.8907);transform-origin:0 50%;font-weight:700;">Suggestions</span>
<span class="t" style="left:818.00px;top:546.00px;font-size:10.97px;color:#222;transform:scaleX(0.9830);transform-origin:0 50%;-webkit-text-stroke:0.12px #222;">Add Prefix/Suffix to Email</span>
<span class="t" style="left:818.00px;top:581.00px;font-size:10.97px;color:#222;transform:scaleX(0.9251);transform-origin:0 50%;-webkit-text-stroke:0.12px #222;">Replace on Email</span>
<span class="t" style="left:818.00px;top:616.00px;font-size:10.97px;color:#222;transform:scaleX(0.9555);transform-origin:0 50%;-webkit-text-stroke:0.12px #222;">Trim whitespaces from Email</span>
<span class="t" style="left:818.00px;top:651.00px;font-size:10.97px;color:#222;transform:scaleX(0.9427);transform-origin:0 50%;-webkit-text-stroke:0.12px #222;">Split Email</span>
<span class="t" style="left:818.00px;top:686.00px;font-size:10.97px;color:#222;transform:scaleX(0.9264);transform-origin:0 50%;-webkit-text-stroke:0.12px #222;">Change case of Email</span>
<span class="t" style="left:818.00px;top:721.00px;font-size:10.97px;color:#222;transform:scaleX(0.9574);transform-origin:0 50%;-webkit-text-stroke:0.12px #222;">Drop Email</span>
<span class="t" style="left:818.00px;top:756.00px;font-size:10.97px;color:#222;transform:scaleX(0.9605);transform-origin:0 50%;-webkit-text-stroke:0.12px #222;">Duplicate Email</span>
</section>
</body></html>
